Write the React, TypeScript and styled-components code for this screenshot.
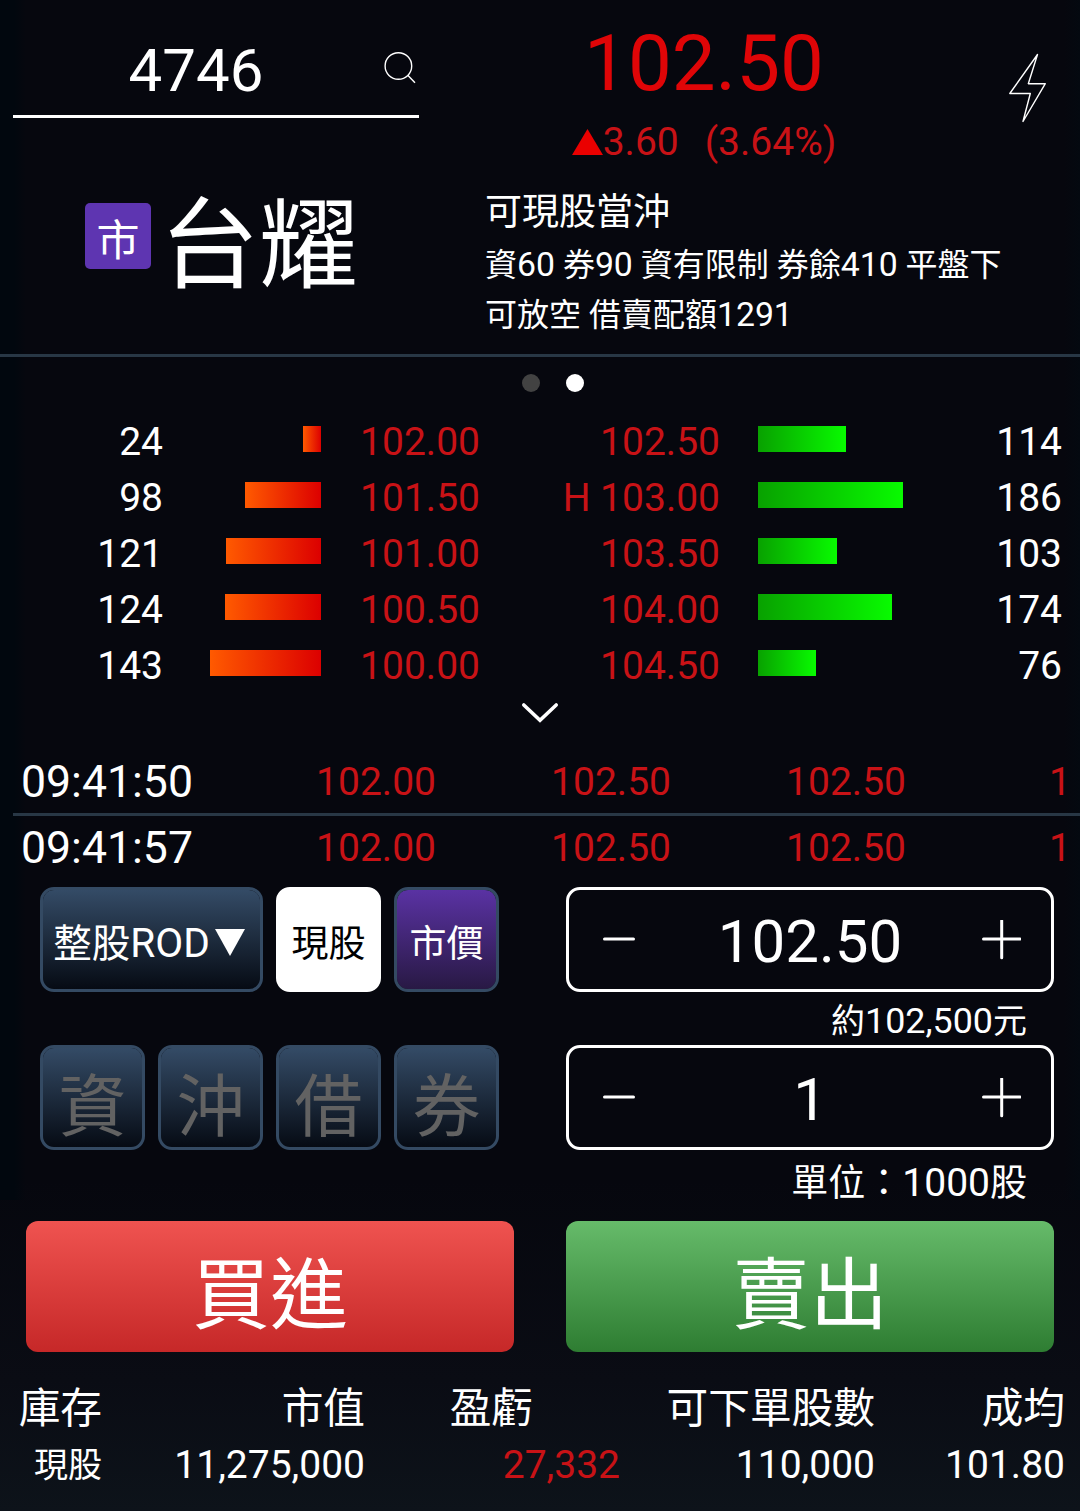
import React from "react";
import styled, { createGlobalStyle } from "styled-components";

const colors = {
  text: "#ffffff",
  up: "#c81216",
  upStrong: "#df0507",
  line: "#283745",
  outline: "#344a63",
};

const GlobalStyle = createGlobalStyle`
  *, *::before, *::after { box-sizing: border-box; }
  body {
    margin: 0;
    background: #06070e;
    font-family: Roboto, "Noto Sans CJK TC", sans-serif;
    color: ${colors.text};
  }
  button { font-family: inherit; margin: 0; padding: 0; }
  svg { display: block; flex: none; }
`;

const Screen = styled.main`
  display: flex;
  flex-direction: column;
  width: 1080px;
  height: 1511px;
  overflow: hidden;
  white-space: nowrap;
  background:
    linear-gradient(90deg, #01070e 0, #01070e 14px, transparent 26px, transparent 1064px, #040910 1080px) 0 0 / 100% 1200px no-repeat,
    linear-gradient(180deg, #06070e 0, #06070e 1180px, #0a0c14 1380px, #0d131a 1511px);
`;

/* Header: symbol, last price and trading notes */

const Header = styled.header`
  display: grid;
  grid-template-columns: 485px 1fr;
  grid-template-rows: 180px 174px;
  height: 357px;
  border-bottom: 3px solid ${colors.line};
`;

const SymbolField = styled.div`
  display: grid;
  grid-template-columns: 364px 42px;
  width: 406px;
  height: 118px;
  margin-left: 13px;
  border-bottom: 3px solid #fff;
`;

const SymbolCode = styled.span`
  padding: 31px 0 0 2px;
  font-size: 60px;
  line-height: 80px;
  text-align: center;
`;

const SearchButton = styled.span`
  padding: 50px 0 0 6px;
`;

const QuoteRow = styled.div`
  display: flex;
  justify-content: space-between;
  padding-right: 32px;
`;

const Quote = styled.div`
  display: flex;
  flex-direction: column;
  align-items: center;
  width: 438px;
`;

const LastPrice = styled.strong`
  margin: 24px 0 0 0;
  font-size: 78px;
  font-weight: 400;
  line-height: 80px;
  color: ${colors.upStrong};
`;

const Change = styled.div`
  display: flex;
  font-size: 39px;
  line-height: 50px;
  margin-top: 13px;
  color: ${colors.up};
`;

const UpMark = styled.svg`
  margin: 12px 0 0 0;
`;

const ChangePercent = styled.span`
  margin-left: 26px;
`;

const BoltWrap = styled.div`
  padding-top: 52px;
`;

const NameRow = styled.div`
  display: flex;
  padding: 23px 0 0 85px;
`;

const MarketBadge = styled.span`
  width: 66px;
  height: 66px;
  padding-top: 5px;
  border-radius: 5px;
  background: #5e35b1;
  font-size: 43px;
  line-height: 66px;
  text-align: center;
`;

const StockName = styled.h1`
  margin: -7px 0 0 9px;
  font-size: 99px;
  font-weight: 400;
  line-height: 100px;
`;

const Notes = styled.div`
  padding-top: 7px;
`;

const Note = styled.p<{ $size: number; $height: number }>`
  margin: 0;
  font-size: ${(p) => p.$size}px;
  line-height: ${(p) => p.$height}px;
`;

const Latin = styled.span`
  font-size: 1.055em;
`;

/* Five-level order book */

const Dots = styled.div`
  display: flex;
  justify-content: center;
  gap: 26px;
  height: 54px;
  padding: 17px 0 0 26px;
`;

const Dot = styled.i<{ $active?: boolean }>`
  width: 18px;
  height: 18px;
  border-radius: 50%;
  background: ${(p) => (p.$active ? "#fff" : "#424242")};
`;

const BookRow = styled.div`
  display: grid;
  grid-template-columns: 163px 158px 159px 240px 180px 162px;
  align-items: center;
  height: 56px;
`;

const Figure = styled.span<{ $up?: boolean }>`
  padding-top: 6px;
  font-size: 39px;
  line-height: 50px;
  text-align: right;
  color: ${(p) => (p.$up ? colors.up : colors.text)};
`;

const Depth = styled.span<{ $side: "bid" | "ask" }>`
  height: 26px;
  justify-self: ${(p) => (p.$side === "bid" ? "end" : "start")};
  margin-left: ${(p) => (p.$side === "bid" ? 0 : 38)}px;
  background: ${(p) =>
    p.$side === "bid"
      ? "linear-gradient(90deg, #ff5a00, #dc0000)"
      : "linear-gradient(90deg, #08a100, #08fb00)"};
`;

const Expand = styled.div`
  display: flex;
  justify-content: center;
  height: 59px;
  padding-top: 9px;
`;

/* Time and sales */

const TickList = styled.div`
  margin-left: 13px;
`;

const Tick = styled.div`
  display: grid;
  grid-template-columns: 188px 235px 235px 235px 165px;
  height: 66px;
  border-bottom: 3px solid ${colors.line};
  line-height: 65px;
  &:last-child { border-bottom-color: transparent; height: 71px; }
`;

const TickTime = styled.span`
  padding-left: 8px;
  font-size: 44.6px;
`;

const TickPrice = styled.span`
  font-size: 39px;
  text-align: right;
  color: ${colors.up};
`;

/* Order form */

const OrderForm = styled.section`
  display: grid;
  grid-template-columns: 459px 488px;
  grid-template-rows: 158px 176px;
  justify-content: space-between;
  padding: 0 26px 0 40px;
`;

const ChipRow = styled.div`
  display: flex;
  gap: 13px;
`;

const Chip = styled.button<{ $tone?: "light" | "violet"; $wide?: boolean; $muted?: boolean }>`
  display: flex;
  justify-content: center;
  align-items: center;
  width: ${(p) => (p.$wide ? 223 : 105)}px;
  height: 105px;
  padding-top: ${(p) => (p.$muted ? 20 : p.$wide ? 8 : 10)}px;
  padding-right: ${(p) => (p.$wide ? 5 : 0)}px;
  border: 3px solid ${(p) => (p.$tone === "light" ? "#fff" : colors.outline)};
  border-radius: 14px;
  background: ${(p) =>
    p.$tone === "light"
      ? "#fff"
      : p.$tone === "violet"
        ? "linear-gradient(180deg, #5a32a3, #281944) padding-box"
        : "linear-gradient(180deg, #344b66, #060b14) padding-box"};
  font-size: ${(p) => (p.$muted ? 68 : p.$wide ? 38.5 : 37)}px;
  line-height: 70px;
  color: ${(p) => (p.$tone === "light" ? "#000" : p.$muted ? "#626262" : "#fff")};
`;

const DownMark = styled.svg`
  margin: 0 0 2px 5px;
`;

const Field = styled.div`
  display: flex;
  flex-direction: column;
`;

const Stepper = styled.div`
  display: grid;
  flex: none;
  grid-template-columns: 100px 1fr 100px;
  align-items: center;
  justify-items: center;
  height: 105px;
  border: 3px solid #fff;
  border-radius: 14px;
`;

const StepValue = styled.span`
  padding-top: 5px;
  font-size: 60px;
  line-height: 80px;
`;

const Hint = styled.span<{ $size: number; $height: number }>`
  padding-right: 27px;
  font-size: ${(p) => p.$size}px;
  line-height: ${(p) => p.$height}px;
  text-align: right;
`;

const Actions = styled.div`
  display: flex;
  justify-content: space-between;
  padding: 0 26px;
`;

const ActionButton = styled.button<{ $side: "buy" | "sell" }>`
  width: 488px;
  height: 131px;
  padding-top: 20px;
  border: 0;
  border-radius: 12px;
  background: ${(p) =>
    p.$side === "buy"
      ? "linear-gradient(180deg, #ef5350, #c62828)"
      : "linear-gradient(180deg, #66bb6a, #2e7d32)"};
  font-size: 78px;
  line-height: 110px;
  color: #fff;
`;

/* Holdings */

const Holdings = styled.div`
  display: grid;
  grid-template-columns: 102px 263px 255px 255px 190px;
  grid-template-rows: 57px 58px;
  padding-top: 28px;
`;

const HeadCell = styled.span<{ $inset?: number }>`
  padding-right: ${(p) => p.$inset ?? 0}px;
  font-size: 41.7px;
  line-height: 58px;
  text-align: right;
`;

const Cell = styled.span<{ $up?: boolean; $small?: boolean }>`
  font-size: ${(p) => (p.$small ? 34 : 39)}px;
  line-height: 56px;
  text-align: right;
  color: ${(p) => (p.$up ? colors.up : colors.text)};
`;

const book = [
  { bidQty: 24, bidBar: 18, bid: "102.00", ask: "102.50", askBar: 88, askQty: 114 },
  { bidQty: 98, bidBar: 76, bid: "101.50", ask: "H 103.00", askBar: 145, askQty: 186 },
  { bidQty: 121, bidBar: 95, bid: "101.00", ask: "103.50", askBar: 79, askQty: 103 },
  { bidQty: 124, bidBar: 96, bid: "100.50", ask: "104.00", askBar: 134, askQty: 174 },
  { bidQty: 143, bidBar: 111, bid: "100.00", ask: "104.50", askBar: 58, askQty: 76 },
];

const ticks = [
  { time: "09:41:50", values: ["102.00", "102.50", "102.50", "1"] },
  { time: "09:41:57", values: ["102.00", "102.50", "102.50", "1"] },
];

/** Sets runs of digits and Latin letters slightly larger than the Han text around them. */
const Mixed = ({ children }: { children: string }) => (
  <span>
    {children.split(/([A-Za-z0-9,]+)/).map((part, i) =>
      i % 2 ? <Latin key={i}>{part}</Latin> : part,
    )}
  </span>
);

const NumberStepper = ({ value }: { value: string }) => (
  <Stepper>
    <svg width="32" height="40" viewBox="0 0 32 40" fill="none" stroke="#fff" strokeWidth="3">
      <path d="M1.5 19H30.5" strokeLinecap="round" />
    </svg>
    <StepValue>{value}</StepValue>
    <svg width="40" height="40" viewBox="0 0 40 40" fill="none" stroke="#fff" strokeWidth="3">
      <path d="M2.5 19H39M20.7 0.8V37.8" strokeLinecap="round" />
    </svg>
  </Stepper>
);

export default function App() {
  return (
    <>
      <GlobalStyle />
      <Screen>
        <Header>
          <SymbolField>
            <SymbolCode>4746</SymbolCode>
            <SearchButton>
              <svg width="34" height="34" viewBox="0 0 34 34" fill="none" stroke="#fff" strokeWidth="1.4">
                <circle cx="15.4" cy="16" r="13.3" />
                <path d="M24.8 25.2L32 32.8" />
              </svg>
            </SearchButton>
          </SymbolField>
          <QuoteRow>
            <Quote>
              <LastPrice>102.50</LastPrice>
              <Change>
                <UpMark width="31" height="26" viewBox="0 0 31 26">
                  <path d="M15.5 0L31 26H0Z" fill="#ea0000" />
                </UpMark>
                <span>3.60</span>
                <ChangePercent>(3.64%)</ChangePercent>
              </Change>
            </Quote>
            <BoltWrap>
              <svg width="40" height="72" viewBox="0 0 40 72" fill="none" stroke="#fff" strokeWidth="1.4">
                <path d="M29.5 2.5L20.3 31.7H37.3L15 69.5L22.3 41.5H1.8Z" strokeLinejoin="round" />
              </svg>
            </BoltWrap>
          </QuoteRow>
          <NameRow>
            <MarketBadge>市</MarketBadge>
            <StockName>台耀</StockName>
          </NameRow>
          <Notes>
            <Note $size={37} $height={52}>可現股當沖</Note>
            <Note $size={32} $height={51}><Mixed>資60 券90 資有限制 券餘410 平盤下</Mixed></Note>
            <Note $size={32} $height={48}><Mixed>可放空 借賣配額1291</Mixed></Note>
          </Notes>
        </Header>

        <Dots>
          <Dot />
          <Dot $active />
        </Dots>
        {book.map((level) => (
          <BookRow key={level.bid}>
            <Figure>{level.bidQty}</Figure>
            <Depth $side="bid" style={{ width: level.bidBar }} />
            <Figure $up>{level.bid}</Figure>
            <Figure $up>{level.ask}</Figure>
            <Depth $side="ask" style={{ width: level.askBar }} />
            <Figure>{level.askQty}</Figure>
          </BookRow>
        ))}
        <Expand>
          <svg width="40" height="24" viewBox="0 0 40 24" fill="none" stroke="#fff" strokeWidth="3.6">
            <path d="M3.8 5L20 20.3L36.2 5" strokeLinecap="round" />
          </svg>
        </Expand>

        <TickList>
          {ticks.map((tick) => (
            <Tick key={tick.time}>
              <TickTime>{tick.time}</TickTime>
              {tick.values.map((value, i) => (
                <TickPrice key={i}>{value}</TickPrice>
              ))}
            </Tick>
          ))}
        </TickList>

        <OrderForm>
          <ChipRow>
            <Chip $wide>
              <Mixed>整股ROD</Mixed>
              <DownMark width="30" height="27" viewBox="0 0 30 27">
                <path d="M0 0H30L15 27Z" fill="#fff" />
              </DownMark>
            </Chip>
            <Chip $tone="light">現股</Chip>
            <Chip $tone="violet">市價</Chip>
          </ChipRow>
          <Field>
            <NumberStepper value="102.50" />
            <Hint $size={34} $height={59}><Mixed>約102,500元</Mixed></Hint>
          </Field>
          <ChipRow>
            <Chip $muted>資</Chip>
            <Chip $muted>沖</Chip>
            <Chip $muted>借</Chip>
            <Chip $muted>券</Chip>
          </ChipRow>
          <Field>
            <NumberStepper value="1" />
            <Hint $size={37} $height={66}><Mixed>單位：1000股</Mixed></Hint>
          </Field>
        </OrderForm>

        <Actions>
          <ActionButton $side="buy">買進</ActionButton>
          <ActionButton $side="sell">賣出</ActionButton>
        </Actions>

        <Holdings>
          <HeadCell>庫存</HeadCell>
          <HeadCell>市值</HeadCell>
          <HeadCell $inset={87}>盈虧</HeadCell>
          <HeadCell>可下單股數</HeadCell>
          <HeadCell>成均</HeadCell>
          <Cell $small>現股</Cell>
          <Cell>11,275,000</Cell>
          <Cell $up>27,332</Cell>
          <Cell>110,000</Cell>
          <Cell>101.80</Cell>
        </Holdings>
      </Screen>
    </>
  );
}
